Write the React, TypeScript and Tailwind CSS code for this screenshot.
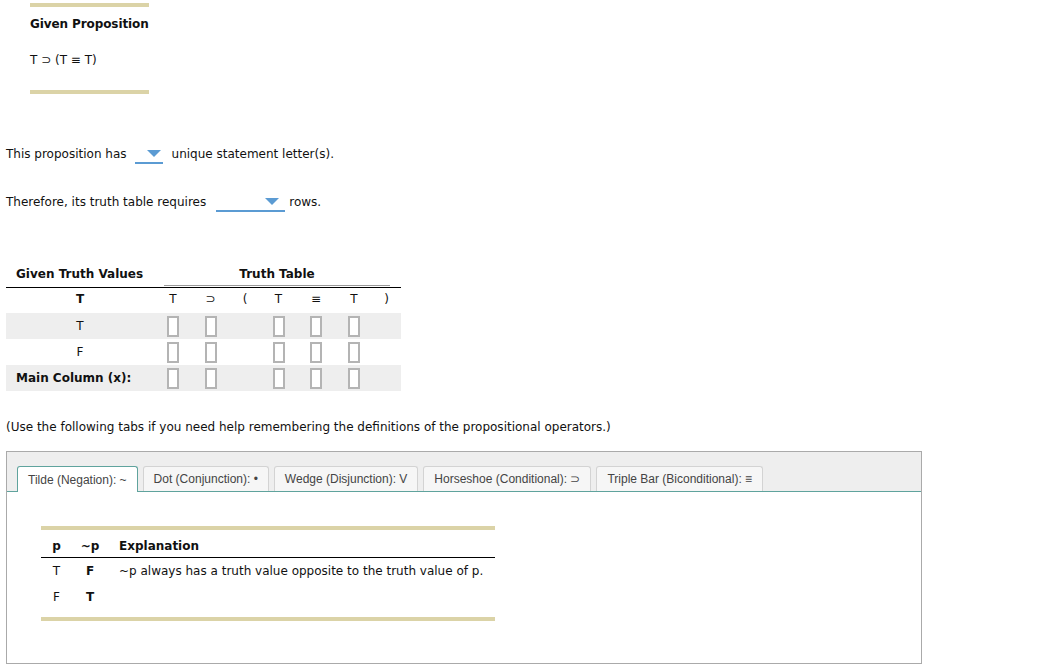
import React from "react";

const TAN = "bg-[#dbd3a7]";

const InputBox = () => (
  <div className="mx-auto h-[21px] w-[12px] border-2 border-[#b4b4b4] bg-white" />
);

const cols = "grid grid-cols-[148px_38px_37px_32px_35px_40px_36px_29px] items-center";

const TruthRow = ({ label, bg, bold }: { label: string; bg: string; bold?: boolean }) => (
  <div className={`${cols} h-[26px] ${bg}`}>
    <div className={bold ? "pl-[10px] font-bold" : "text-center"}>{label}</div>
    <InputBox />
    <InputBox />
    <div />
    <InputBox />
    <InputBox />
    <InputBox />
    <div />
  </div>
);

const tabs = [
  "Tilde (Negation): ~",
  "Dot (Conjunction): •",
  "Wedge (Disjunction): V",
  "Horseshoe (Conditional): ⊃",
  "Triple Bar (Biconditional): ≡",
];

export default function App() {
  return (
    <div className="min-h-[668px] bg-white text-[12px] text-[#111] [font-family:'DejaVu_Sans',Verdana,sans-serif]">
      {/* given proposition */}
      <div className="pl-[30px] pt-[3px]">
        <div className="w-[119px]">
          <div className={`h-[4px] ${TAN}`} />
          <div className="mt-[8px] whitespace-nowrap font-bold tracking-[-0.1px]">Given Proposition</div>
          <div className="mt-[18px]">T ⊃ (T ≡ T)</div>
          <div className={`mt-[21px] h-[4px] ${TAN}`} />
        </div>
      </div>

      <div className="mt-[50px] flex items-center pl-[6px]">
        <span>This proposition has</span>
        <span className="ml-[8px] mr-[9px] flex h-[20px] w-[28px] items-center justify-end border-b-2 border-[#5b9bd3] pr-[2px]">
          <svg width="14" height="7" viewBox="0 0 14 7">
            <path d="M0 0 L14 0 L7 7 Z" fill="#5b9bd3" />
          </svg>
        </span>
        <span>unique statement letter(s).</span>
      </div>

      <div className="mt-[28px] flex items-center pl-[6px]">
        <span>Therefore, its truth table requires</span>
        <span className="ml-[10px] mr-[4px] flex h-[20px] w-[69px] items-center justify-end border-b-2 border-[#5b9bd3] pr-[6px]">
          <svg width="14" height="7" viewBox="0 0 14 7">
            <path d="M0 0 L14 0 L7 7 Z" fill="#5b9bd3" />
          </svg>
        </span>
        <span>rows.</span>
      </div>

      {/* truth table */}
      <div className="ml-[6px] mt-[53px] w-[395px]">
        <div className="flex items-end border-b border-black pb-[1px]">
          <div className="w-[158px] pl-[10px] pb-[3px] font-bold">Given Truth Values</div>
          <div className="w-[226px] border-b border-[#999] pb-[2px] text-center font-bold">Truth Table</div>
        </div>
        <div className={`${cols} h-[25px] pb-[3px]`}>
          <div className="text-center font-bold">T</div>
          <div className="text-center">T</div>
          <div className="text-center">⊃</div>
          <div className="text-center">(</div>
          <div className="text-center">T</div>
          <div className="text-center">≡</div>
          <div className="text-center">T</div>
          <div className="text-center">)</div>
        </div>
        <TruthRow label="T" bg="bg-[#eeeeee]" />
        <TruthRow label="F" bg="bg-white" />
        <TruthRow label="Main Column (x):" bg="bg-[#eeeeee]" bold />
      </div>

      <div className="mt-[27px] pl-[6px]">
        (Use the following tabs if you need help remembering the definitions of the propositional operators.)
      </div>

      {/* tabs */}
      <div className="ml-[6px] mt-[15px] h-[213px] w-[916px] border border-[#aaaaaa]">
        <div className="flex h-[40px] items-end gap-[5px] border-b border-[#5fa39d] bg-[#eeeeee] pl-[10px] [font-family:'Liberation_Sans',Arial,sans-serif]">
          {tabs.map((t, i) => (
            <div
              key={t}
              className={
                i === 0
                  ? "-mb-px flex h-[26px] items-center rounded-t-[3px] border border-b-0 border-[#5fa39d] bg-white px-[10px] text-[12px] text-[#444]"
                  : "flex h-[25px] items-center rounded-t-[3px] border border-b-0 border-[#d3d3d3] bg-[#f6f6f6] px-[10px] text-[12px] text-[#444]"
              }
            >
              {t}
            </div>
          ))}
        </div>

        <div className="pl-[34px] pt-[34px]">
          <div className="w-[454px]">
            <div className={`h-[4px] ${TAN}`} />
            <div className="flex h-[28px] items-center border-b border-black pt-[4px] font-bold">
              <div className="w-[31px] text-center">p</div>
              <div className="w-[36px] text-center">~p</div>
              <div className="pl-[11px]">Explanation</div>
            </div>
            <div className="flex h-[26px] items-center">
              <div className="w-[31px] text-center">T</div>
              <div className="w-[36px] text-center font-bold">F</div>
              <div className="pl-[11px]">~p always has a truth value opposite to the truth value of p.</div>
            </div>
            <div className="flex h-[26px] items-center">
              <div className="w-[31px] text-center">F</div>
              <div className="w-[36px] text-center font-bold">T</div>
            </div>
            <div className={`mt-[7px] h-[4px] ${TAN}`} />
          </div>
        </div>
      </div>
    </div>
  );
}
